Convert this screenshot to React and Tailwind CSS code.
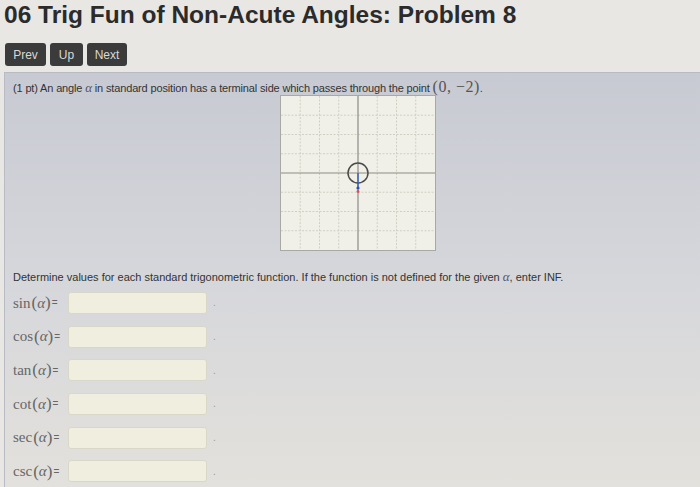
import React from "react";

const sans = { fontFamily: '"Liberation Sans", Arial, sans-serif' };

function Alpha() {
  return <span className="italic font-['Liberation_Serif',serif] text-[13px] text-[#556]">α</span>;
}

function Graph() {
  const lines = [];
  for (let i = 1; i < 8; i++) {
    const p = i * 19.25;
    if (i === 4) continue;
    lines.push(<line key={"v" + i} x1={p} y1="0" x2={p} y2="154" stroke="#cfcfc4" strokeDasharray="2 1.5" strokeWidth="1" />);
    lines.push(<line key={"h" + i} x1="0" y1={p} x2="154" y2={p} stroke="#cfcfc4" strokeDasharray="2 1.5" strokeWidth="1" />);
  }
  return (
    <svg width="156" height="156" viewBox="-1 -1 156 156" className="block">
      <rect x="-0.5" y="-0.5" width="155" height="155" fill="#f1f0e8" stroke="#a9a9a4" />
      {lines}
      <line x1="77" y1="0" x2="77" y2="154" stroke="#8c8c86" strokeWidth="1.2" />
      <line x1="0" y1="77" x2="154" y2="77" stroke="#8c8c86" strokeWidth="1.2" />
      <circle cx="77" cy="77" r="10" fill="none" stroke="#4a4a48" strokeWidth="1.5" />
      <line x1="77" y1="77" x2="77" y2="92" stroke="#3060c8" strokeWidth="1.4" />
      <circle cx="77" cy="92" r="1.6" fill="#2a4fb0" />
      <circle cx="77" cy="95.5" r="1.4" fill="#e05050" />
    </svg>
  );
}

function Row({ fn }) {
  return (
    <div className="flex items-center h-[33.7px]">
      <span className="w-[55px] flex items-center text-[#666] text-[15px]" style={{ fontFamily: '"Liberation Serif", "DejaVu Serif", serif' }}>
        {fn}
        <span className="text-[17px] ml-[1px]">(</span>
        <span className="italic text-[15px]">α</span>
        <span className="text-[17px]">)</span>
        <span className="text-[10px] ml-[1px]" style={sans}>=</span>
      </span>
      <div className="w-[139px] h-[22px] bg-[#efeedf] border border-[#d9d8c8] rounded-[3px]" />
      <span className="ml-[6px] text-[#999] text-[10px]">.</span>
    </div>
  );
}

export default function App() {
  return (
    <div className="w-[700px] h-[487px] overflow-hidden bg-[#e9e7e4]" style={sans}>
      <h1 className="pl-[4px] pt-[1px] h-[43px] text-[24.5px] font-bold text-[#2b2b2b] leading-[28px]">
        06 Trig Fun of Non-Acute Angles: Problem 8
      </h1>
      <div className="flex gap-[4px] pl-[5px] h-[23px]">
        <button className="w-[41px] rounded-[3px] bg-[#3b3b3b] text-[#d8d8d8] text-[12px]">Prev</button>
        <button className="w-[33px] rounded-[3px] bg-[#3b3b3b] text-[#d8d8d8] text-[12px]">Up</button>
        <button className="w-[40px] rounded-[3px] bg-[#3b3b3b] text-[#d8d8d8] text-[12px]">Next</button>
      </div>
      <div className="ml-[4px] mt-[6px] h-[420px] border-t border-l border-[#b8bac4] bg-gradient-to-b from-[#c8cad3] via-[#d6d7db] to-[#e3e1dc] pl-[8px]">
        <p className="pt-[2px] h-[22px] flex items-baseline text-[11px] tracking-[-0.15px] text-[#333]">
          <span>(1 pt) An angle&nbsp;</span>
          <Alpha />
          <span>&nbsp;in standard position has a terminal side which passes through the point&nbsp;</span>
          <span className="text-[16px] tracking-[0.5px] text-[#555]" style={{ fontFamily: '"Liberation Serif", serif' }}>(0, −2)</span>
          <span>.</span>
        </p>
        <div className="pl-[267px]">
          <Graph />
        </div>
        <p className="mt-[16px] h-[14px] flex items-baseline text-[11px] text-[#333]">
          <span>Determine values for each standard trigonometric function. If the function is not defined for the given&nbsp;</span>
          <Alpha />
          <span>, enter INF.</span>
        </p>
        <div className="mt-[5px]">
          <Row fn="sin" />
          <Row fn="cos" />
          <Row fn="tan" />
          <Row fn="cot" />
          <Row fn="sec" />
          <Row fn="csc" />
        </div>
      </div>
    </div>
  );
}
